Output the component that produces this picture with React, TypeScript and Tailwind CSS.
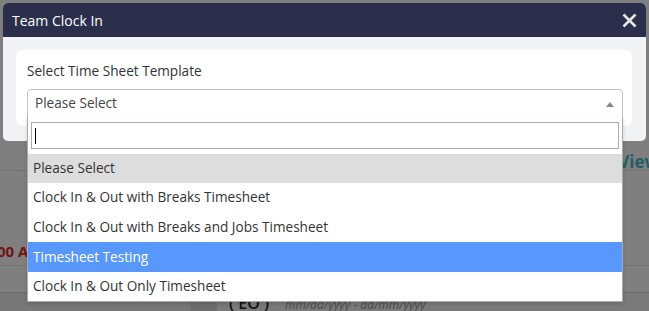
import React from 'react';

const options = [
    'Please Select',
    'Clock In & Out with Breaks Timesheet',
    'Clock In & Out with Breaks and Jobs Timesheet',
    'Timesheet Testing',
    'Clock In & Out Only Timesheet',
];

const heights = ['h-[29px]', 'h-[29px]', 'h-[30px]', 'h-[30px]', 'h-[29px]'];

export default function App() {
    const hovered = 0;
    const highlighted = 3;

    return (
        <div className="relative w-[649px] h-[311px] overflow-hidden bg-white font-['Open_Sans',sans-serif]">
            {/* Page behind the modal */}
            <div className="flex flex-col w-full h-full">
                <div className="h-[173px] border-b border-[#e4e4e4] flex justify-end items-start pt-[153px]">
                    <span className="text-[17px] font-bold text-[#3cc0ca] leading-none -mr-[10px]">View</span>
                </div>
                <div className="h-[98px] border-b border-[#e4e4e4] flex items-start pt-[73px]">
                    <span className="text-[15px] font-bold text-[#e02828] leading-none -ml-[3px]">00 AM</span>
                </div>
                <div className="h-[30px]" />
                <div className="flex-1 flex bg-[#eeeeee] border-t border-[#d8d8d8]">
                    <div className="w-[190px]" />
                    <div className="w-[27px] bg-[#dcdcdc]" />
                    <div className="flex items-start gap-4 pl-[12px] bg-[#f4f4f4] flex-1">
                        <span className="text-[16px] font-semibold text-[#222] leading-none mt-[2px]">( EO )</span>
                        <span className="text-[12px] italic text-[#999] leading-none mt-[6px]">mm/dd/yyyy - dd/mm/yyyy</span>
                    </div>
                </div>
            </div>

            {/* Backdrop */}
            <div className="absolute inset-0 bg-black/50" />

            {/* Modal */}
            <div className="absolute left-[3px] top-[3px] w-[643px] h-[138px] rounded-[5px] bg-[#f2f3f5] overflow-hidden flex flex-col">
                <div className="h-[34px] bg-[#2b2f4b] flex items-center justify-between pl-[9px] pr-[9px]">
                    <span className="text-white text-[14px]">Team Clock In</span>
                    <svg width="15" height="15" viewBox="0 0 15 15">
                        <path d="M1.5 1.5 L13.5 13.5 M13.5 1.5 L1.5 13.5" stroke="#e6e6e6" strokeWidth="2.6" />
                    </svg>
                </div>
                <div className="pt-[13px] pl-[13px] pr-[14px]">
                    <div className="bg-white rounded-[8px] pl-[11px] pr-[9px] pt-[12px] pb-[7px]">
                        <div className="text-[13.6px] text-[#333] leading-[18px] mb-[9px]">Select Time Sheet Template</div>
                        <div className="h-[30px] border border-[#c5c5c5] rounded-t-[4px] flex items-center justify-between pl-[7px] pr-[8px]">
                            <span className="text-[13.6px] text-[#444] -mt-[1px]">Please Select</span>
                            <span className="w-0 h-0 border-l-[4px] border-r-[4px] border-b-[5px] border-l-transparent border-r-transparent border-b-[#888]" />
                        </div>
                    </div>
                </div>
            </div>

            {/* Open dropdown */}
            <div className="absolute left-[27px] top-[117px] w-[596px] bg-white border border-t-0 border-[#aaaaaa] shadow-[0_2px_4px_rgba(0,0,0,0.15)]">
                <div className="px-[3px] pt-[5px] pb-[5px]">
                    <div className="relative h-[27px] border border-[#aaaaaa]">
                        <span className="absolute left-[3px] top-[5px] w-[1px] h-[16px] bg-black" />
                    </div>
                </div>
                {options.map((o, i) => (
                    <div
                        key={o}
                        className={`${heights[i]} flex items-center pl-[5px] text-[13.6px] ${
                            i === highlighted ? 'bg-[#5897fb] text-white' : i === hovered ? 'bg-[#dddddd] text-[#333]' : 'text-[#333]'
                        }`}
                    >
                        {o}
                    </div>
                ))}
            </div>
        </div>
    );
}
